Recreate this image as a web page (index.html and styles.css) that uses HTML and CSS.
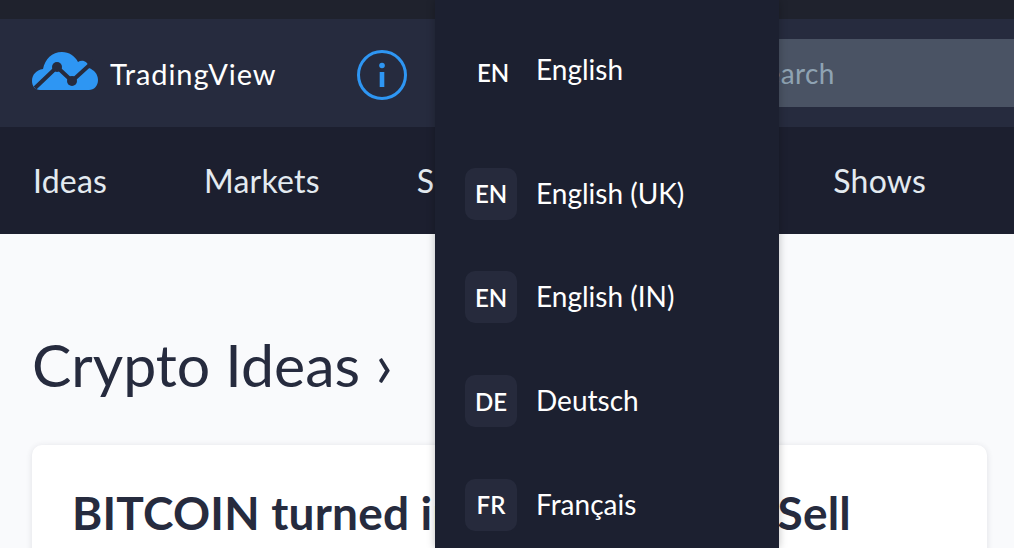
FILE: index.html
```html
<!DOCTYPE html>
<html lang="en">
<head>
<meta charset="utf-8">
<title>Crypto Ideas — TradingView</title>
<link rel="stylesheet" href="styles.css">
</head>
<body>
<div class="topbar"></div>
<header class="header">
  <a class="logo" href="#">
    <svg class="logo-mark" viewBox="0 0 66 38" width="66" height="38" aria-hidden="true">
      <path class="cloud" d="M8 38C3 38 0 34 0 29C0 23 4 18 11 17C13 7 20 0 30 0C37 0 43 4 46 10C50 7 56 9 57 16C62 18 66 22 66 28C66 34 62 38 57 38Z"/>
      <path class="cloud-line" d="M3 36L25 15L40 29L62 9"/>
      <circle class="cloud-node" cx="25" cy="15" r="5"/>
      <circle class="cloud-node" cx="40" cy="29" r="5"/>
    </svg>
    <span class="logo-text">TradingView</span>
  </a>
  <svg class="info" viewBox="0 0 50 50" width="50" height="50" aria-hidden="true">
    <circle class="info-ring" cx="25" cy="25" r="23.5"/>
    <circle class="info-dot" cx="25" cy="15.5" r="2.8"/>
    <rect class="info-dot" x="22.7" y="22" width="4.6" height="15"/>
  </svg>
  <div class="search">Search</div>
</header>
<nav class="nav">
  <a href="#">Ideas</a>
  <a href="#">Markets</a>
  <a href="#">Screeners</a>
  <a class="nav-last" href="#">Shows</a>
</nav>
<main class="main">
  <h1 class="heading">Crypto Ideas <span class="chev">›</span></h1>
  <article class="card">
    <h2 class="card-title">BITCOIN turned into a Long-Term Sell</h2>
  </article>
</main>
<aside class="menu">
  <div class="row row-current"><span class="tag tag-plain">EN</span><span class="label">English</span></div>
  <div class="row"><span class="tag">EN</span><span class="label">English (UK)</span></div>
  <div class="row"><span class="tag">EN</span><span class="label">English (IN)</span></div>
  <div class="row"><span class="tag">DE</span><span class="label">Deutsch</span></div>
  <div class="row"><span class="tag">FR</span><span class="label">Français</span></div>
</aside>
</body>
</html>
```
FILE: styles.css
```css
* { box-sizing: border-box; }
html, body { height: 100%; }
body {
  margin: 0;
  overflow: hidden;
  background: #f9fafc;
  font-family: "Lato", "Open Sans", sans-serif;
  color: #262b3e;
}
a { color: inherit; text-decoration: none; }
.topbar { height: 19px; background: #1f222d; }
.header {
  height: 108px;
  background: #262b3e;
  display: flex;
  align-items: center;
  padding-left: 32px;
}
.logo { display: flex; align-items: center; gap: 12px; width: 244px; color: #fff; font-size: 29px; letter-spacing: .9px; }
.logo-mark { display: block; margin-top: -4px; flex: none; }
.cloud { fill: #2e96f3; }
.cloud-line { fill: none; stroke: #262b3e; stroke-width: 4; }
.cloud-node { fill: #262b3e; }
.info { margin: 4px 0 0 81px; }
.info-ring { fill: none; stroke: #2e96f3; stroke-width: 3; }
.info-dot { fill: #2e96f3; }
.search {
  margin-left: auto;
  width: 300px;
  height: 68px;
  background: #4a5364;
  color: #8fa3b3;
  font-size: 28px;
  letter-spacing: .4px;
  line-height: 68px;
  padding-left: 36px;
}
.nav {
  height: 107px;
  background: #1c1f2f;
  display: flex;
  align-items: center;
  gap: 97px;
  padding: 0 88px 0 33px;
  color: #e3eaf0;
  font-size: 32px;
  letter-spacing: .2px;
}
.nav-last { margin-left: auto; }
.main { padding: 0 27px 0 32px; }
.heading {
  margin: 90px 0 41px;
  font-size: 59px;
  line-height: 78px;
  font-weight: 400;
}
.chev { font-size: 62px; }
.card {
  height: 300px;
  background: #fff;
  border-radius: 10px;
  box-shadow: 0 1px 6px rgba(38, 43, 62, .12);
  padding: 36px 40px;
}
.card-title { margin: 0; font-size: 46px; letter-spacing: .2px; line-height: 64px; font-weight: 700; white-space: nowrap; }
.menu {
  position: absolute;
  top: 0;
  left: 435px;
  bottom: 0;
  width: 344px;
  background: #1c2030;
  box-shadow: 0 0 8px rgba(0, 0, 0, .25);
  padding: 44px 30px 0;
  color: #fff;
  display: flex;
  flex-direction: column;
  gap: 51.7px;
}
.row { display: flex; align-items: center; gap: 19px; font-size: 28px; }
.row-current { margin-bottom: 20px; }
.tag {
  width: 52px;
  height: 52px;
  flex: none;
  background: #262a3c;
  border-radius: 10px;
  display: flex;
  align-items: center;
  justify-content: center;
  font-size: 24px;
  font-weight: 600;
}
.tag-plain { background: none; transform: translate(2px, 2px); }
.label { margin-top: -2px; }
```
